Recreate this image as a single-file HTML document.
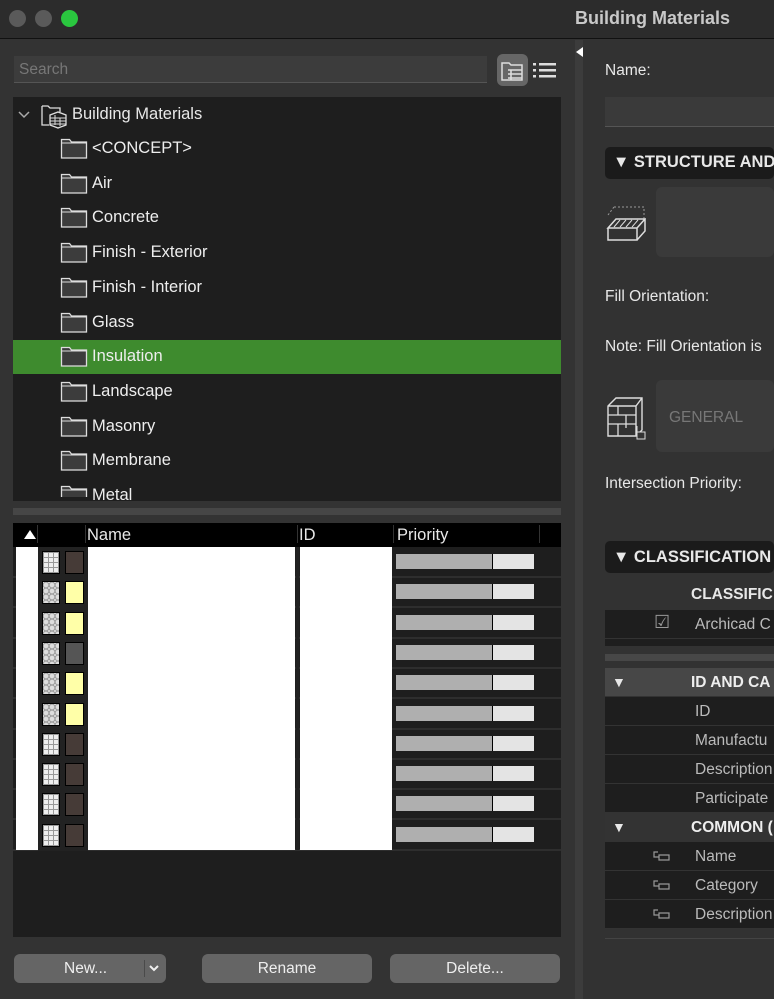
<!DOCTYPE html>
<html><head><meta charset="utf-8"><style>
*{margin:0;padding:0;box-sizing:border-box}
body{width:774px;height:999px;background:#333;font-family:"Liberation Sans",sans-serif;color:#e8e8e8;position:relative;overflow:hidden;font-size:15.5px}
.a{position:absolute}
.t{position:absolute;white-space:nowrap}
.btn{position:absolute;top:954px;height:29px;background:#656565;border-radius:6px;text-align:center;line-height:29px;font-size:15.5px;color:#eee;white-space:nowrap}
.rp{position:absolute;left:605px;width:169px;background:#1e1e1e;border-bottom:1px solid #333;overflow:hidden}
.rp span{position:absolute;left:90px;top:6px;font-size:15.5px;color:#bbb;white-space:nowrap}
</style></head><body>
<div class="a" style="left:0;top:0;width:774px;height:39px;background:#2c2c2c;border-bottom:1px solid #111"></div>
<div class="a" style="left:9px;top:10px;width:17px;height:17px;border-radius:50%;background:#5a5a5a"></div>
<div class="a" style="left:35px;top:10px;width:17px;height:17px;border-radius:50%;background:#5a5a5a"></div>
<div class="a" style="left:61px;top:10px;width:17px;height:17px;border-radius:50%;background:#2ac73f"></div>
<div class="t" style="left:575px;top:8px;font-size:18px;font-weight:bold;color:#c8c8c8">Building Materials</div>

<div class="a" style="left:575px;top:40px;width:8px;height:959px;background:#3c3c3c"></div>
<div class="a" style="left:576px;top:47px;width:0;height:0;border-top:5px solid transparent;border-bottom:5px solid transparent;border-right:7px solid #fff"></div>
<div class="a" style="left:583px;top:40px;width:191px;height:959px;background:#323232"></div>

<div class="a" style="left:14px;top:56px;width:473px;height:27px;background:#3c3c3c;border-bottom:1px solid #555"></div>
<div class="t" style="left:19px;top:61px;color:#777;font-size:15.5px">Search</div>
<div class="a" style="left:497px;top:54px;width:31px;height:32px;background:#666;border-radius:6px"></div>
<svg class="a" style="left:500px;top:60px" width="26" height="22"><path d="M2 3h7l2 2h11v15H2z" fill="none" stroke="#ddd" stroke-width="1.5"/><path d="M8 10h14M8 14h14M8 18h14M11 10v10" stroke="#ddd" stroke-width="1.6"/></svg>
<svg class="a" style="left:532px;top:62px" width="26" height="18"><g fill="#ddd"><rect x="1" y="1" width="3" height="2.5"/><rect x="7" y="1" width="17" height="2.5"/><rect x="1" y="7" width="3" height="2.5"/><rect x="7" y="7" width="17" height="2.5"/><rect x="1" y="13" width="3" height="2.5"/><rect x="7" y="13" width="17" height="2.5"/></g></svg>

<div class="a" style="left:13px;top:97px;width:548px;height:404px;background:#1e1e1e;overflow:hidden">
<svg class="a" style="left:5px;top:13px" width="12" height="10"><path d="M1 2l5 5 5-5" fill="none" stroke="#aaa" stroke-width="1.5"/></svg>
<svg class="a" style="left:27px;top:6px" width="30" height="26"><path d="M2 3h6l2 2h10v4M2 3v19h7" fill="none" stroke="#ddd" stroke-width="1.3"/><path d="M10 12l8-3 8 3v10l-8 3-8-3z" fill="#1e1e1e" stroke="#ddd" stroke-width="1.3"/><path d="M10 15h16M10 18h16M10 21h16M15 12v10M20 15v8" stroke="#ddd" stroke-width="1"/></svg>
<div class="t" style="left:59px;top:8px;font-size:16.5px">Building Materials</div>
<div class="a" style="left:0;top:243px;width:548px;height:34px;background:#3e8b2e"></div>
</div>
<div id="tree"></div>
<script>
var names=["&lt;CONCEPT&gt;","Air","Concrete","Finish - Exterior","Finish - Interior","Glass","Insulation","Landscape","Masonry","Membrane","Metal"];
var h="";
for(var i=0;i<names.length;i++){var y=131+i*34.7;var hh=(i==10)?13:22;h+='<div class="a" style="left:60px;top:'+(y+6)+'px;width:28px;height:'+hh+'px;overflow:hidden"><svg width="28" height="22"><path d="M1.5 2.5h8l2 2.5h15v16h-25z" fill="#3c3c3c" stroke="#ddd" stroke-width="1.3"/><path d="M1.5 6h25" stroke="#ddd" stroke-width="1"/></svg></div><div class="t" style="left:92px;top:'+(y+8)+'px;font-size:16.5px;color:#eee">'+names[i]+'</div>';}
document.getElementById("tree").innerHTML=h;
</script>
<div class="a" style="left:0;top:501px;width:575px;height:7px;background:#333"></div>
<div class="a" style="left:13px;top:508px;width:548px;height:7px;background:#464646"></div>

<div class="a" style="left:13px;top:523px;width:548px;height:24px;background:#000"></div>
<div class="a" style="left:24px;top:530px;width:0;height:0;border-left:6px solid transparent;border-right:6px solid transparent;border-bottom:9px solid #fff"></div>
<div class="a" style="left:37px;top:525px;width:1px;height:18px;background:#333"></div>
<div class="a" style="left:85px;top:525px;width:1px;height:18px;background:#333"></div>
<div class="a" style="left:297px;top:525px;width:1px;height:18px;background:#333"></div>
<div class="a" style="left:393px;top:525px;width:1px;height:18px;background:#333"></div>
<div class="a" style="left:539px;top:525px;width:1px;height:18px;background:#333"></div>
<div class="t" style="left:87px;top:526px;font-size:16.5px">Name</div>
<div class="t" style="left:299px;top:526px;font-size:16.5px">ID</div>
<div class="t" style="left:397px;top:526px;font-size:16.5px">Priority</div>
<div class="a" style="left:13px;top:547px;width:548px;height:390px;background:#1e1e1e"></div>
<div id="tbl"></div>
<div class="a" style="left:16px;top:547px;width:22px;height:303px;background:#fff"></div>
<div class="a" style="left:88px;top:547px;width:207px;height:303px;background:#fff"></div>
<div class="a" style="left:300px;top:547px;width:92px;height:303px;background:#fff"></div>
<div class="a" style="left:296px;top:547px;width:3px;height:303px;background:#222"></div>
<script>
var c=["#463b37","#ffffa8","#ffffa8","#555","#ffffa8","#ffffa8","#463b37","#463b37","#463b37","#463b37"];
var g=[0,1,1,1,1,1,0,0,0,0];var h="";
for(var i=0;i<10;i++){var y=Math.round(547+i*30.3);
h+='<div class="a" style="left:13px;top:'+(y+29)+'px;width:548px;height:2px;background:#2e2e2e"></div>';
h+='<div class="a" style="left:38px;top:'+y+'px;width:50px;height:31px;background:#222"></div>';
h+='<div class="a" style="left:42px;top:'+(y+4)+'px;width:18px;height:23px;background:'+(g[i]?'#ddd':'#eee')+';border:1px solid #000;'+(g[i]?'background-image:radial-gradient(circle,transparent 2px,#888 3px,transparent 3.5px);background-size:6px 6px':'background-image:linear-gradient(#999 1px,transparent 1px),linear-gradient(90deg,#999 1px,transparent 1px);background-size:5px 5px')+'"></div>';
h+='<div class="a" style="left:65px;top:'+(y+4)+'px;width:19px;height:23px;background:'+c[i]+';border:1px solid #000"></div>';
h+='<div class="a" style="left:396px;top:'+(y+7)+'px;width:96px;height:15px;background:#afafaf"></div>';
h+='<div class="a" style="left:492px;top:'+(y+7)+'px;width:42px;height:15px;background:#e4e4e4;border-left:1px solid #000"></div>';}
document.getElementById("tbl").innerHTML=h;
</script>

<div class="btn" style="left:14px;width:152px"><span style="position:absolute;left:50px;top:0">New...</span><span style="position:absolute;left:130px;top:6px;width:1px;height:17px;background:#4a4a4a"></span><svg style="position:absolute;left:134px;top:10px" width="12" height="9"><path d="M2 2l4 4 4-4" fill="none" stroke="#eee" stroke-width="2"/></svg></div>
<div class="btn" style="left:202px;width:170px">Rename</div>
<div class="btn" style="left:390px;width:170px">Delete...</div>

<div class="t" style="left:605px;top:62px">Name:</div>
<div class="a" style="left:605px;top:97px;width:169px;height:30px;background:#3a3a3a;border-bottom:1px solid #555"></div>
<div class="a" style="left:605px;top:147px;width:169px;height:32px;background:#1b1b1b;border-radius:5px"></div>
<div class="t" style="left:613px;top:153px;font-size:16.5px;font-weight:bold">▼ STRUCTURE AND</div>
<svg class="a" style="left:606px;top:205px" width="40" height="40"><path d="M8 2h30v14M8 2l-6 8" fill="none" stroke="#999" stroke-dasharray="2 2"/><path d="M2 23l8-9h29l-8 9zM2 23v12h29V23M31 35l8-9V14" fill="none" stroke="#ddd" stroke-width="1.5"/><path d="M8 22l6-7M14 22l6-7M20 22l6-7M26 22l6-7" stroke="#ddd"/></svg>
<div class="a" style="left:656px;top:187px;width:118px;height:70px;background:#3a3a3a;border-radius:6px"></div>
<div class="t" style="left:605px;top:288px">Fill Orientation:</div>
<div class="t" style="left:605px;top:338px">Note: Fill Orientation is</div>
<svg class="a" style="left:606px;top:396px" width="44" height="44"><path d="M2 10l8-8h26v32l-6 6H2zM2 10h28v30M30 10l6-8" fill="none" stroke="#ddd" stroke-width="1.4"/><path d="M2 19h28M2 28h28M12 10v9M20 19v9M12 28v12M20 28v4" stroke="#ddd" stroke-width="1.3"/><path d="M31 30v6h8v7h-8z" fill="#333" stroke="#ddd"/></svg>
<div class="a" style="left:656px;top:380px;width:118px;height:72px;background:#3a3a3a;border-radius:6px"></div>
<div class="t" style="left:669px;top:409px;color:#777">GENERAL</div>
<div class="t" style="left:605px;top:475px">Intersection Priority:</div>

<div class="a" style="left:605px;top:541px;width:169px;height:32px;background:#1b1b1b;border-radius:5px"></div>
<div class="t" style="left:613px;top:548px;font-size:16.5px;font-weight:bold">▼ CLASSIFICATION</div>
<div class="t" style="left:691px;top:586px;font-weight:bold">CLASSIFIC</div>
<div class="rp" style="top:610px;height:29px"><span>Archicad C</span></div>
<div class="t" style="left:654px;top:612px;color:#999;font-size:18px">☑</div>
<div class="a" style="left:605px;top:639px;width:169px;height:7px;background:#1e1e1e"></div>
<div class="a" style="left:605px;top:654px;width:169px;height:7px;background:#474747"></div>
<div class="rp" style="top:668px;height:29px;background:#474747"><span style="left:86px;font-weight:bold;color:#eee">ID AND CA</span></div>
<div class="t" style="left:612px;top:674px;font-size:14px">▼</div>
<div class="rp" style="top:697px;height:29px"><span>ID</span></div>
<div class="rp" style="top:726px;height:29px"><span>Manufactu</span></div>
<div class="rp" style="top:755px;height:29px"><span>Description</span></div>
<div class="rp" style="top:784px;height:29px"><span>Participate</span></div>
<div class="rp" style="top:813px;height:29px;background:#333"><span style="left:86px;font-weight:bold;color:#eee">COMMON (</span></div>
<div class="t" style="left:612px;top:819px;font-size:14px">▼</div>
<div class="rp" style="top:842px;height:29px"><span>Name</span></div>
<div class="rp" style="top:871px;height:29px"><span>Category</span></div>
<div class="rp" style="top:900px;height:29px"><span>Description</span></div>
<svg class="a" style="left:652px;top:850px" width="20" height="12"><path d="M6 2H2v5h5M7 5h10v5H7z" fill="none" stroke="#999" stroke-width="1.2"/></svg>
<svg class="a" style="left:652px;top:879px" width="20" height="12"><path d="M6 2H2v5h5M7 5h10v5H7z" fill="none" stroke="#999" stroke-width="1.2"/></svg>
<svg class="a" style="left:652px;top:908px" width="20" height="12"><path d="M6 2H2v5h5M7 5h10v5H7z" fill="none" stroke="#999" stroke-width="1.2"/></svg>
<div class="a" style="left:605px;top:938px;width:169px;height:1px;background:#444"></div>
</body></html>
